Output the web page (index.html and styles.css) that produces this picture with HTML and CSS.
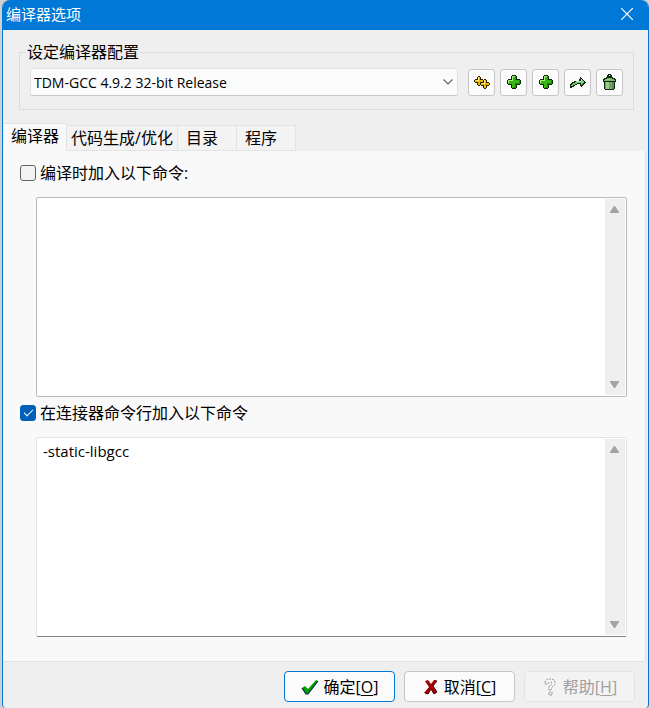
FILE: index.html
```html
<!DOCTYPE html>
<html lang="zh-CN">
  <head>
    <meta charset="utf-8" />
    <title>编译器选项</title>
    <meta name="viewport" content="width=device-width, initial-scale=1" />
    <link rel="stylesheet" href="styles.css">
  </head>
  <body>
    <div class="window">
      <header class="titlebar">
        <h1>编译器选项</h1>
        <button class="close" type="button" aria-label="关闭">
          <svg width="12" height="12" viewBox="0 0 12 12"><path d="M0 0L12 12M12 0L0 12" fill="none" stroke="#fff" stroke-width="1.2" /></svg>
        </button>
      </header>

      <fieldset class="config">
        <legend>设定编译器配置</legend>
        <div class="config-row">
          <div class="combo">
            <select aria-label="设定编译器配置">
              <option>TDM-GCC 4.9.2 32-bit Release</option>
            </select>
            <svg class="chevron" width="10" height="6" viewBox="0 0 10 6"><path d="M0.5 0.5L5 5L9.5 0.5" fill="none" stroke="#606060" stroke-width="1.1" /></svg>
          </div>
          <button class="tool" type="button" aria-label="自动查找">
            <svg width="16" height="13" viewBox="0 0 16 13" shape-rendering="crispEdges">
              <path d="M4 0h2v1h1v2h2v1h1v2h-1v1h-2v2h-1v1h-2v-1h-1v-2h-2v-1h-1v-2h1v-1h2v-2h1z" fill="#302000" />
              <path d="M4 1h2v3h3v2h-3v3h-2v-3h-3v-2h3z" fill="#e8b800" />
              <path d="M4 1h1v4h-3v-1h2z" fill="#fff07a" />
              <path d="M10 3h2v1h1v2h2v1h1v2h-1v1h-2v2h-1v1h-2v-1h-1v-2h-2v-1h-1v-2h1v-1h2v-2h1z" fill="#302000" />
              <path d="M10 4h2v3h3v2h-3v3h-2v-3h-3v-2h3z" fill="#e8b800" />
              <path d="M10 4h1v4h-3v-1h2z" fill="#fff07a" />
            </svg>
          </button>
          <button class="tool" type="button" aria-label="添加空配置">
            <svg width="14" height="14" viewBox="0 0 14 14" shape-rendering="crispEdges">
              <path d="M5 0h4v1h1v3h3v1h1v4h-1v1h-3v3h-1v1h-4v-1h-1v-3h-3v-1h-1v-4h1v-1h3v-3h1z" fill="#08280a" />
              <path d="M5 1h4v4h4v4h-4v4h-4v-4h-4v-4h4z" fill="#35b512" />
              <path d="M5 1h3v1h-2v4h-4v2h-1v-3h4z" fill="#a4ea7c" />
              <path d="M8 2h1v3h-1zM12 5h1v4h-4v4h-3v-1h2v-4h4z" fill="#208c08" />
            </svg>
          </button>
          <button class="tool" type="button" aria-label="添加配置">
            <svg width="14" height="14" viewBox="0 0 14 14" shape-rendering="crispEdges">
              <path d="M5 0h4v1h1v3h3v1h1v4h-1v1h-3v3h-1v1h-4v-1h-1v-3h-3v-1h-1v-4h1v-1h3v-3h1z" fill="#08280a" />
              <path d="M5 1h4v4h4v4h-4v4h-4v-4h-4v-4h4z" fill="#35b512" />
              <path d="M5 1h3v1h-2v4h-4v2h-1v-3h4z" fill="#a4ea7c" />
              <path d="M8 2h1v3h-1zM12 5h1v4h-4v4h-3v-1h2v-4h4z" fill="#208c08" />
            </svg>
          </button>
          <button class="tool" type="button" aria-label="重命名">
            <svg width="16" height="11" viewBox="0 0 16 11" shape-rendering="crispEdges">
              <path d="M10 0h1v1h1v1h1v1h1v1h1v1h1v1h-1v1h-1v1h-1v1h-1v1h-1v-1h-1v-2h-3v1h-2v1h-1v1h-2v1h-2v-1h-1v-2h1v-1h1v-1h1v-1h2v-1h5z" fill="#102810" />
              <path d="M11 2h1v1h1v1h1v2h-1v1h-1v1h-1v-2h-4v1h-2v1h-2v1h-2v-1h1v-1h1v-1h2v-1h6z" fill="#72c878" />
              <path d="M11 2h1v3h-6v-1h5z" fill="#a8e4a8" />
            </svg>
          </button>
          <button class="tool" type="button" aria-label="删除">
            <svg width="13" height="16" viewBox="0 0 13 16" shape-rendering="crispEdges">
              <path d="M5 0h3v1h1v2h1v1h2v1h1v3h-1v7h-1v1h-9v-1h-1v-7h-1v-3h1v-1h2v-1h1v-2h1z" fill="#102810" />
              <path d="M6 1h1v1h-1z" fill="#fafafa" />
              <path d="M4 4h5v1h2v1h1v1h-11v-1h1v-1h2z" fill="#80b870" />
              <path d="M2 8h9v7h-9z" fill="#72a565" />
              <path d="M3 5h4v1h-4zM3 8h3v7h-3z" fill="#9acb8a" />
              <path d="M9 8h2v7h-2z" fill="#5a8c50" />
            </svg>
          </button>
        </div>
      </fieldset>

      <div class="tabs" role="tablist">
        <button class="tab active" type="button" role="tab" aria-selected="true">编译器</button>
        <button class="tab" type="button" role="tab" aria-selected="false">代码生成/优化</button>
        <button class="tab" type="button" role="tab" aria-selected="false">目录</button>
        <button class="tab" type="button" role="tab" aria-selected="false">程序</button>
      </div>

      <main class="page" role="tabpanel">
        <div class="option">
          <input type="checkbox" id="compile-on" />
          <label for="compile-on">编译时加入以下命令:</label>
        </div>
        <div class="memo">
          <textarea aria-label="编译命令"></textarea>
          <div class="scroll">
            <svg width="9" height="7" viewBox="0 0 9 7"><path d="M4 0h1l4 6v1h-9v-1z" fill="#a3a3a3" /></svg>
            <svg width="9" height="7" viewBox="0 0 9 7"><path d="M0 0h9v1l-4 6h-1l-4 -6z" fill="#a3a3a3" /></svg>
          </div>
        </div>
        <div class="option">
          <input type="checkbox" id="link-on" checked />
          <label for="link-on">在连接器命令行加入以下命令</label>
        </div>
        <div class="memo focused">
          <textarea aria-label="连接器命令" spellcheck="false">-static-libgcc</textarea>
          <div class="scroll">
            <svg width="9" height="7" viewBox="0 0 9 7"><path d="M4 0h1l4 6v1h-9v-1z" fill="#a3a3a3" /></svg>
            <svg width="9" height="7" viewBox="0 0 9 7"><path d="M0 0h9v1l-4 6h-1l-4 -6z" fill="#a3a3a3" /></svg>
          </div>
        </div>
      </main>

      <footer class="actions">
        <button class="btn primary" type="button">
          <svg width="18" height="16" viewBox="0 0 18 16">
            <path d="M1 9L4 7L7 10L15 1L17 2L7 15L5 15Z" fill="#00a000" />
            <path d="M1 9L5 15L7 15L17 2" fill="none" stroke="#002850" stroke-width="1.2" />
          </svg>
          <span>确定[<u>O</u>]</span>
        </button>
        <button class="btn" type="button">
          <svg width="16" height="16" viewBox="0 0 16 16">
            <path d="M2 2L5 1L8 5L11 1L14 1L10 7L14 13L11 15L8 10L5 15L1 14L6 8Z" fill="#a00000" />
            <path d="M14 2L10 7L14 13L11 15L8 10L5 15L2 14" fill="none" stroke="#500000" />
          </svg>
          <span>取消[<u>C</u>]</span>
        </button>
        <button class="btn" type="button" disabled>
          <svg width="16" height="18" viewBox="0 0 16 18">
            <path d="M3 5Q3 1 8 1Q13 1 13 5Q13 7 10 9L9 12L7 12L7 8Q10 7 10 5Q10 4 8 4Q6 4 6 6L3 6ZM7 14h3v3h-3z" fill="#fafafa" stroke="#8c8c8c" stroke-dasharray="2 1" />
          </svg>
          <span>帮助[<u>H</u>]</span>
        </button>
      </footer>
    </div>
  </body>
</html>
```
FILE: styles.css
```css
* {
  box-sizing: border-box;
}
body {
  margin: 0;
  background: #d0d0d0;
  color: #000;
}
body,
button,
select,
textarea {
  font-family: "Open Sans", "Noto Sans CJK SC", sans-serif;
  font-size: 16px;
  line-height: 20px;
}
.window {
  display: flex;
  flex-direction: column;
  min-height: 100vh;
  margin-left: 2px;
  background: #efefef;
  border: 1px solid #0078d7;
  border-top: 0;
  border-bottom: 0;
  border-radius: 8px 8px 4px 4px;
}
.titlebar {
  display: flex;
  align-items: center;
  justify-content: space-between;
  height: 30px;
  padding: 0 15px 2px 3px;
  background: #0078d7;
  color: #fff;
  border-radius: 7px 7px 0 0;
}
.titlebar h1 {
  margin: 0;
  font-size: 15px;
  font-weight: normal;
}
.close {
  display: flex;
  padding: 0;
  border: 0;
  background: none;
}

/* compiler set */
.config {
  min-width: 0;
  margin: 12px 14px 13px 16px;
  padding: 6px 10px 13px;
  border: 1px solid #dcdcdc;
}
.config legend {
  margin-left: -4px;
  padding: 0 1px;
}
.config-row {
  display: flex;
  align-items: center;
  gap: 5px;
}
.combo {
  position: relative;
  flex: 1;
  min-width: 0;
  margin-right: 5px;
}
.combo select {
  display: block;
  width: 100%;
  height: 28px;
  padding: 1px 24px 0 3px;
  border: 1px solid #e3e3e3;
  border-bottom-color: #c8c8c8;
  border-radius: 2px;
  background: #fbfbfb;
  color: #000;
  font-size: 14px;
  appearance: none;
}
.chevron {
  position: absolute;
  top: 11px;
  right: 5px;
  pointer-events: none;
}
.tool {
  display: flex;
  align-items: center;
  justify-content: center;
  width: 27px;
  height: 27px;
  padding: 0;
  border: 1px solid #c6c6c6;
  border-radius: 3px;
  background: #fbfbfb;
}

/* tabs */
.tabs {
  display: flex;
  align-items: flex-end;
  padding-left: 1px;
}
.tab {
  height: 26px;
  padding: 0 4px;
  border: 1px solid #e3e3e3;
  border-left: 0;
  background: #f3f3f3;
  color: #000;
  white-space: nowrap;
}
.tab:nth-child(n + 3) {
  width: 59px;
  padding-left: 8px;
  text-align: left;
}
.tab.active {
  height: 28px;
  padding: 0 7px 2px;
  border-bottom-color: #f9f9f9;
  background: #f9f9f9;
}
.page {
  flex: 1;
  margin-right: 2px;
  padding: 12px 18px 24px 17px;
  background: #f9f9f9;
  border-right: 1px solid #e3e3e3;
  border-bottom: 1px solid #e3e3e3;
}
.option {
  display: flex;
  align-items: center;
  gap: 4px;
  height: 20px;
}
.option input {
  width: 16px;
  height: 16px;
  margin: 0;
  border: 1px solid #626262;
  border-radius: 3px;
  background: #f3f3f3;
  appearance: none;
}
.option input:checked {
  display: flex;
  align-items: center;
  justify-content: center;
  border-color: #005fb8;
  background: #005fb8;
}
.option input:checked:before {
  content: '';
  width: 8px;
  height: 4px;
  margin-bottom: 3px;
  border-left: 1px solid #fff;
  border-bottom: 1px solid #fff;
  transform: rotate(-45deg);
}
.memo {
  display: flex;
  height: 200px;
  margin: 14px 0 6px 16px;
  border: 1px solid #b9b9b9;
  border-radius: 2px;
  background: #fff;
}
.memo.focused {
  margin-bottom: 0;
  border-color: #e3e3e3;
  border-bottom-color: #868686;
}
.memo textarea {
  flex: 1;
  min-width: 0;
  padding: 3px 6px;
  border: 0;
  outline: 0;
  background: none;
  color: #000;
  font-size: 15px;
  resize: none;
  overflow: hidden;
}
.scroll {
  display: flex;
  flex-direction: column;
  align-items: center;
  justify-content: space-between;
  width: 20px;
  margin: 1px;
  padding: 7px 1px 7px 0;
  background: #efefef;
}

/* bottom buttons */
.actions {
  display: flex;
  justify-content: flex-end;
  gap: 9px;
  padding: 9px 13px 6px;
}
.btn {
  display: flex;
  align-items: center;
  justify-content: center;
  gap: 5px;
  width: 111px;
  height: 31px;
  padding: 0;
  border: 1px solid #c6c6c6;
  border-radius: 4px;
  background: #fbfbfb;
  color: #000;
}
.btn u {
  text-underline-offset: 2px;
}
.btn.primary {
  border-color: #0078d7;
}
.btn:disabled {
  border-color: #e3e3e3;
  background: #f3f3f3;
  color: #a0a0a0;
}
```
